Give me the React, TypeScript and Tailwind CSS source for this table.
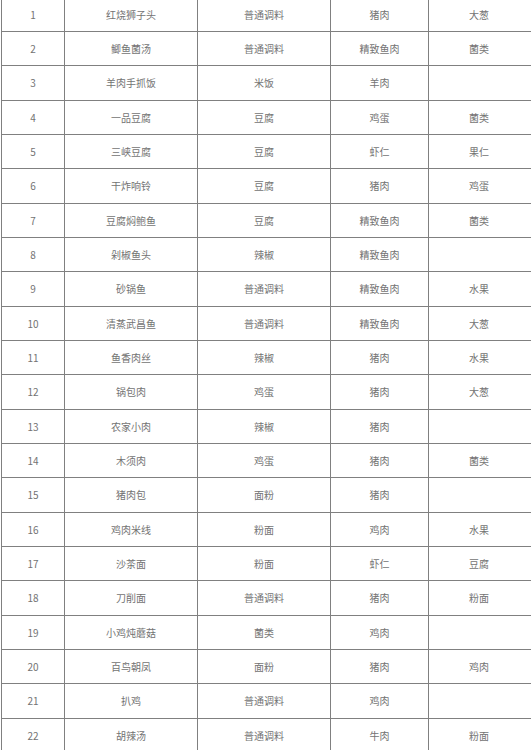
const rows: [string, string, string, string, string][] = [
  ["1", "红烧狮子头", "普通调料", "猪肉", "大葱"],
  ["2", "鲫鱼菌汤", "普通调料", "精致鱼肉", "菌类"],
  ["3", "羊肉手抓饭", "米饭", "羊肉", ""],
  ["4", "一品豆腐", "豆腐", "鸡蛋", "菌类"],
  ["5", "三峡豆腐", "豆腐", "虾仁", "果仁"],
  ["6", "干炸响铃", "豆腐", "猪肉", "鸡蛋"],
  ["7", "豆腐焖鲍鱼", "豆腐", "精致鱼肉", "菌类"],
  ["8", "剁椒鱼头", "辣椒", "精致鱼肉", ""],
  ["9", "砂锅鱼", "普通调料", "精致鱼肉", "水果"],
  ["10", "清蒸武昌鱼", "普通调料", "精致鱼肉", "大葱"],
  ["11", "鱼香肉丝", "辣椒", "猪肉", "水果"],
  ["12", "锅包肉", "鸡蛋", "猪肉", "大葱"],
  ["13", "农家小肉", "辣椒", "猪肉", ""],
  ["14", "木须肉", "鸡蛋", "猪肉", "菌类"],
  ["15", "猪肉包", "面粉", "猪肉", ""],
  ["16", "鸡肉米线", "粉面", "鸡肉", "水果"],
  ["17", "沙茶面", "粉面", "虾仁", "豆腐"],
  ["18", "刀削面", "普通调料", "猪肉", "粉面"],
  ["19", "小鸡炖蘑菇", "菌类", "鸡肉", ""],
  ["20", "百鸟朝凤", "面粉", "猪肉", "鸡肉"],
  ["21", "扒鸡", "普通调料", "鸡肉", ""],
  ["22", "胡辣汤", "普通调料", "牛肉", "粉面"],
];

export default function App() {
  return (
    <div className="h-[750px] w-[531px] overflow-hidden bg-white">
      <div
        className="-mt-[2.33px] ml-px w-[540px] text-[10px] text-[#737373]"
        style={{ fontFamily: '"Noto Sans CJK SC", "Noto Sans", sans-serif' }}
      >
        {rows.map((r) => (
          <div
            key={r[0]}
            className="grid h-[34.33px] grid-cols-[63px_133px_133px_98px_113px] border-b border-[#808080]"
          >
            {r.map((c, i) => (
              <div
                key={i}
                className={
                  i === 4
                    ? "flex items-center justify-center border-l border-[#808080] pr-[12px]"
                    : "flex items-center justify-center border-l border-[#808080]"
                }
              >
                {c}
              </div>
            ))}
          </div>
        ))}
      </div>
    </div>
  );
}
